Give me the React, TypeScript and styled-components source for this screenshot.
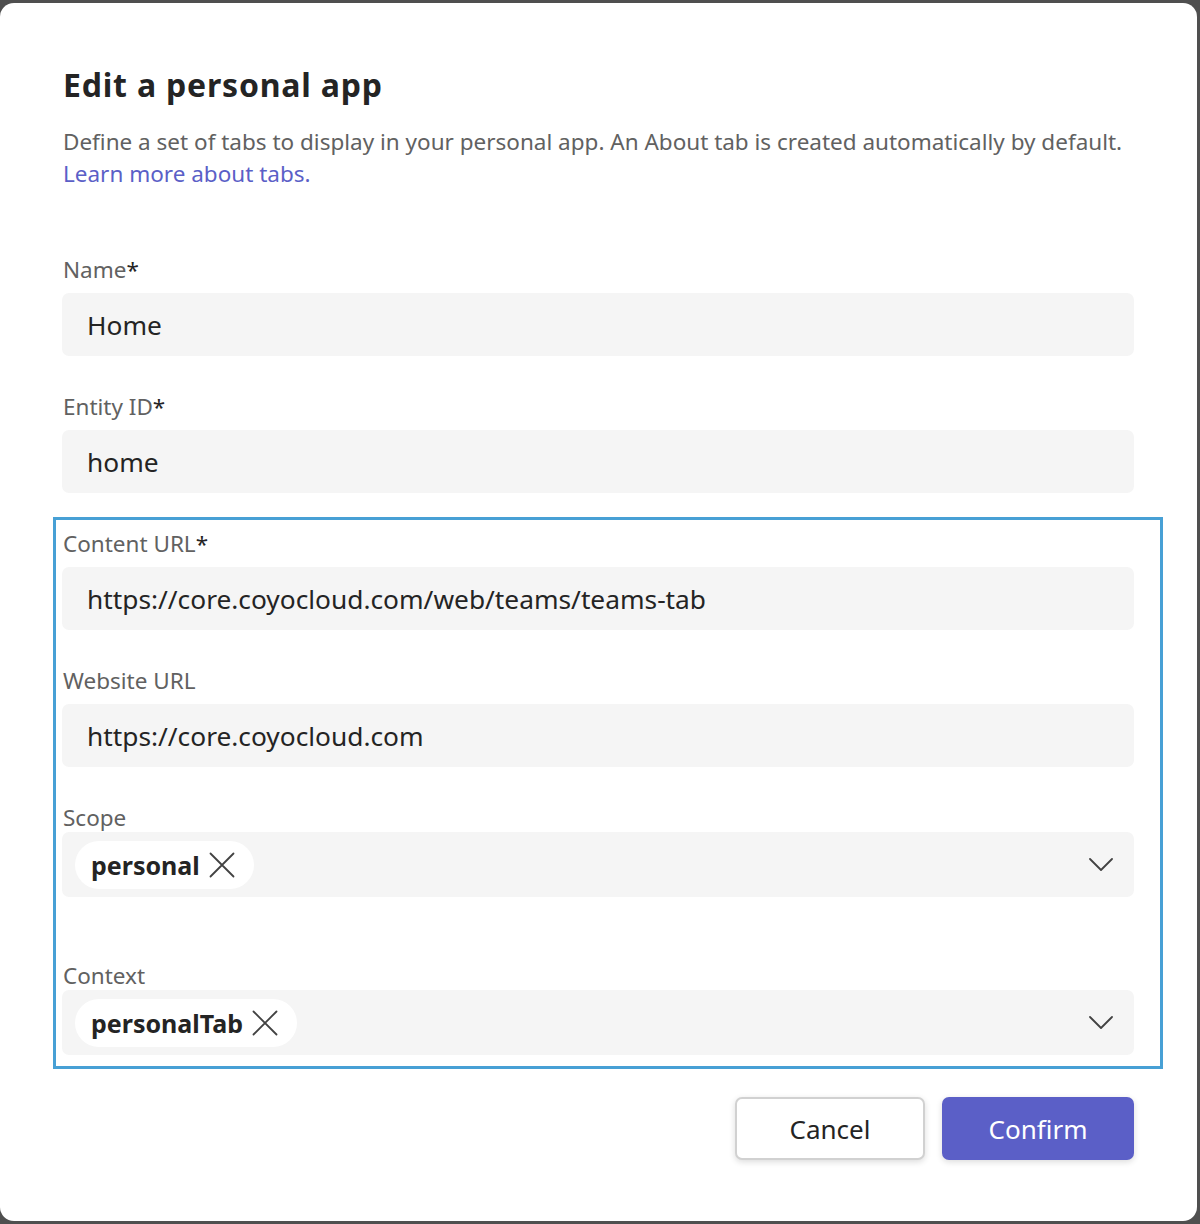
import styled, { createGlobalStyle } from 'styled-components';

const GlobalStyle = createGlobalStyle`
  html, body {
    margin: 0;
    padding: 0;
    background: #4f4f4f;
  }
  body {
    font-family: "Noto Sans", "Open Sans", sans-serif;
    color: #242424;
  }
  * {
    box-sizing: border-box;
  }
`;

const Page = styled.div`
  width: 1200px;
  height: 1224px;
  padding: 3px 3px 3px 0;
  background: #4f4f4f;
`;

const Dialog = styled.div`
  height: 100%;
  background: #ffffff;
  border-radius: 14px;
  padding: 62px 63px 0 62px;
  display: flex;
  flex-direction: column;
`;

const Title = styled.h1`
  margin: 0 0 0 1px;
  font-size: 32px;
  line-height: 40px;
  letter-spacing: 0.8px;
  font-weight: 700;
  color: #242424;
`;

const Description = styled.p`
  margin: 21px 0 0 1px;
  font-size: 22.5px;
  line-height: 32px;
  color: #616161;
`;

const LearnLink = styled.a`
  color: #5b5fc7;
  text-decoration: none;
`;

const Fields = styled.div`
  display: flex;
  flex-direction: column;
  margin-top: 66px;
`;

const Field = styled.div<{ $gapAfter?: number }>`
  display: flex;
  flex-direction: column;
  margin-bottom: ${({ $gapAfter }) => $gapAfter ?? 37}px;
`;

const Label = styled.label<{ $gap?: number }>`
  font-size: 22.5px;
  line-height: 28px;
  color: #616161;
  margin-bottom: ${({ $gap }) => $gap ?? 9}px;
  margin-left: 1px;

  b {
    color: #242424;
    font-weight: 400;
  }
`;

const Input = styled.div`
  height: 63px;
  background: #f5f5f5;
  border-radius: 7px;
  padding: 0 25px;
  display: flex;
  align-items: center;
  font-size: 26.3px;
  color: #242424;
`;

const Highlight = styled.div`
  margin: 0 -29px 0 -9px;
  border: 3px solid #47a0d5;
  padding: 10px 26px 11px 6px;
  display: flex;
  flex-direction: column;
`;

const Select = styled.div`
  height: 65px;
  background: #f5f5f5;
  border-radius: 7px;
  padding: 0 21px 0 13px;
  display: flex;
  align-items: center;
  justify-content: space-between;
`;

const Chip = styled.span`
  height: 48px;
  border-radius: 24px;
  background: #ffffff;
  padding: 0 19px 0 16px;
  display: inline-flex;
  align-items: center;
  gap: 9px;
  font-size: 25px;
  font-weight: 700;
  color: #242424;
`;

const Footer = styled.div`
  display: flex;
  justify-content: flex-end;
  gap: 17px;
  margin-top: 28px;
`;

const Button = styled.button<{ $primary?: boolean }>`
  height: 63px;
  width: ${({ $primary }) => ($primary ? 192 : 190)}px;
  border-radius: 7px;
  font-family: inherit;
  font-size: 26px;
  cursor: pointer;
  border: ${({ $primary }) => ($primary ? 'none' : '2px solid #d1d1d1')};
  background: ${({ $primary }) => ($primary ? '#5b5fc7' : '#ffffff')};
  color: ${({ $primary }) => ($primary ? '#ffffff' : '#242424')};
  box-shadow: 0 2px 6px rgba(0, 0, 0, 0.14);
`;

function Dismiss() {
  return (
    <svg width="26" height="26" viewBox="0 0 26 26" fill="none">
      <path d="M1.5 1.5 L24.5 24.5 M24.5 1.5 L1.5 24.5" stroke="#424242" strokeWidth="1.8" strokeLinecap="round" />
    </svg>
  );
}

function Chevron() {
  return (
    <svg width="24" height="13" viewBox="0 0 24 13" fill="none">
      <path d="M1 1 L12 12 L23 1" stroke="#424242" strokeWidth="1.8" strokeLinecap="round" strokeLinejoin="round" />
    </svg>
  );
}

function TextField({ label, value, required, gapAfter }: { label: string; value: string; required?: boolean; gapAfter?: number }) {
  return (
    <Field $gapAfter={gapAfter}>
      <Label>
        {label}
        {required && <b>*</b>}
      </Label>
      <Input>{value}</Input>
    </Field>
  );
}

function TagField({ label, tag, gapAfter }: { label: string; tag: string; gapAfter?: number }) {
  return (
    <Field $gapAfter={gapAfter}>
      <Label $gap={0}>{label}</Label>
      <Select>
        <Chip>
          {tag}
          <Dismiss />
        </Chip>
        <Chevron />
      </Select>
    </Field>
  );
}

export default function App() {
  return (
    <Page>
      <GlobalStyle />
      <Dialog>
        <Title>Edit a personal app</Title>
        <Description>
          Define a set of tabs to display in your personal app. An About tab is created automatically by default.
          <br />
          <LearnLink href="#">Learn more about tabs.</LearnLink>
        </Description>

        <Fields>
          <TextField label="Name" value="Home" required />
          <TextField label="Entity ID" value="home" required gapAfter={24} />

          <Highlight>
            <TextField label="Content URL" value="https://core.coyocloud.com/web/teams/teams-tab" required />
            <TextField label="Website URL" value="https://core.coyocloud.com" />
            <TagField label="Scope" tag="personal" gapAfter={65} />
            <TagField label="Context" tag="personalTab" gapAfter={0} />
          </Highlight>
        </Fields>

        <Footer>
          <Button>Cancel</Button>
          <Button $primary>Confirm</Button>
        </Footer>
      </Dialog>
    </Page>
  );
}
